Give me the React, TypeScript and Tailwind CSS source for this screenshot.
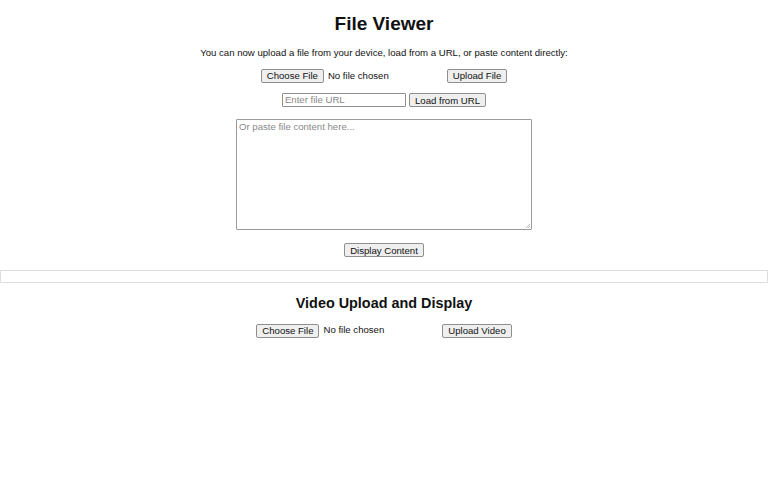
import { useState } from "react";

const btn =
  "h-[14px] px-[5px] text-[9.6px] leading-none text-[#111] bg-[#efefef] border border-[#8f8f8f] rounded-[2px] whitespace-nowrap";

const FilePicker = () => (
  <div className="w-[186px] flex items-center">
    <button className={btn}>Choose File</button>
    <span className="ml-[4px] text-[9.6px] text-[#111]">No file chosen</span>
  </div>
);

export default function App() {
  const [url, setUrl] = useState("");
  const [content, setContent] = useState("");

  return (
    <div className="min-h-[480px] bg-white text-[#111] font-['Liberation_Sans',Arial,sans-serif] flex flex-col items-center">
      {/* File viewer */}
      <h1 className="mt-[13px] h-[22px] leading-[22px] text-[19px] font-bold">File Viewer</h1>
      <p className="mt-[12px] h-[11px] leading-[11px] text-[9.6px]">
        You can now upload a file from your device, load from a URL, or paste content directly:
      </p>

      <div className="mt-[11px] flex items-center">
        <FilePicker />
        <button className={btn}>Upload File</button>
      </div>

      <div className="mt-[10px] flex items-center gap-[3px]">
        <input
          value={url}
          onChange={(e) => setUrl(e.target.value)}
          placeholder="Enter file URL"
          className="w-[124px] h-[14px] px-[2px] text-[9.6px] border border-[#8f8f8f] rounded-[1px] outline-none placeholder:text-[#8a8a8a]"
        />
        <button className={btn}>Load from URL</button>
      </div>

      <div className="relative mt-[12px]">
        <textarea
          value={content}
          onChange={(e) => setContent(e.target.value)}
          placeholder="Or paste file content here..."
          className="block w-[296px] h-[111px] px-[2px] py-[1px] text-[9.6px] leading-[11px] border border-[#9a9a9a] rounded-[1px] resize-none outline-none placeholder:text-[#8a8a8a]"
        />
        <svg className="absolute right-[2px] bottom-[2px] w-[5px] h-[5px]" viewBox="0 0 5 5">
          <path d="M1 5 L5 1 M3 5 L5 3" stroke="#9a9a9a" strokeWidth="0.7" fill="none" />
        </svg>
      </div>

      <button className={`${btn} mt-[13px]`}>Display Content</button>

      {/* content display */}
      <div className="mt-[13px] w-full h-[13px] border border-[#dedede]" />

      {/* Video */}
      <h2 className="mt-[12px] h-[17px] leading-[17px] text-[14.4px] font-bold">Video Upload and Display</h2>
      <div className="mt-[11px] flex items-center">
        <FilePicker />
        <button className={btn}>Upload Video</button>
      </div>
    </div>
  );
}
